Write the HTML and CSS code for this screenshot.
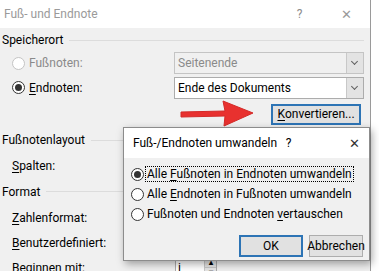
FILE: index.html
```html
<!DOCTYPE html>
<html>
  <head>
    <title>Fuß- und Endnote</title>
    <meta charset="UTF-8" />
    <link rel="stylesheet" href="styles.css">
  </head>
  <body>
    <div class="dialog main">
      <div class="titlebar">
        <span class="caption">Fuß- und Endnote</span>
        <span class="help">?</span>
        <span class="close">&#x2715;</span>
      </div>
      <div class="body">
        <div class="group"><span>Speicherort</span><i></i></div>
        <div class="row first">
          <span class="radio off disabled"></span>
          <span class="label disabled">Fußnoten:</span>
          <div class="combo disabled"><span>Seitenende</span><b></b></div>
        </div>
        <div class="row">
          <span class="radio on"></span>
          <span class="label"><u>E</u>ndnoten:</span>
          <div class="combo"><span>Ende des Dokuments</span><b></b></div>
        </div>
        <div class="row btnrow">
          <span class="button focus"><u>K</u>onvertieren...</span>
        </div>
        <div class="group layout"><span>Fußnotenlayout</span><i></i></div>
        <div class="row sub"><span class="label"><u>S</u>palten:</span></div>
        <div class="group format"><span>Format</span><i></i></div>
        <div class="row sub"><span class="label"><u>Z</u>ahlenformat:</span></div>
        <div class="row sub"><span class="label"><u>B</u>enutzerdefiniert:</span></div>
        <div class="row sub">
          <span class="label">Beginnen mit:</span>
          <div class="spin"><span>i</span><b><em>&#x25B4;</em><em>&#x25BE;</em></b></div>
        </div>
      </div>
    </div>

    <svg class="arrow" width="80" height="30" viewBox="0 0 80 30">
      <path d="M4 14 L48 13 L46 3 L76 15 L47 28 L48 18 L4 19 Z" fill="#e8312f" stroke="#d42a28" stroke-width="1" stroke-linejoin="round"/>
    </svg>

    <div class="dialog popup">
      <div class="titlebar">
        <span class="caption">Fuß-/Endnoten umwandeln</span>
        <span class="help">?</span>
        <span class="close">&#x2715;</span>
      </div>
      <div class="body">
        <div class="opt"><span class="radio on"></span><span class="dotted">Alle <u>F</u>ußnoten in Endnoten umwandeln</span></div>
        <div class="opt"><span class="radio off"></span><span>Alle <u>E</u>ndnoten in Fußnoten umwandeln</span></div>
        <div class="opt"><span class="radio off"></span><span>Fußnoten und Endnoten <u>v</u>ertauschen</span></div>
        <div class="buttons">
          <span class="button focus ok">OK</span>
          <span class="button">Abbrechen</span>
        </div>
      </div>
    </div>
  </body>
</html>
```

FILE: styles.css
```css
* {
  box-sizing: border-box;
}
html, body {
  margin: 0;
  background: #ffffff;
  font-family: Roboto, "Noto Sans", sans-serif;
  font-size: 12px;
  color: #000000;
}
body {
  position: relative;
  width: 379px;
  height: 271px;
  overflow: hidden;
}
u {
  text-decoration: underline;
  text-underline-offset: 2px;
}
.dialog.main {
  width: 371px;
  height: 271px;
  border-right: 1px solid #9a9a9a;
  display: flex;
  flex-direction: column;
}
.titlebar {
  height: 28px;
  background: #ffffff;
  display: flex;
  align-items: center;
  flex: none;
}
.main .titlebar .caption {
  margin-left: 4px;
  color: #9a9a9a;
  flex: 1;
}
.titlebar .help {
  color: #8c8c8c;
  width: 47px;
  text-align: center;
}
.titlebar .close {
  color: #9a9a9a;
  width: 47px;
  text-align: center;
  font-size: 13px;
}
.body {
  flex: 1;
  background: #f0f0f0;
}
.main .body {
  overflow: hidden;
}
.group {
  height: 24px;
  display: flex;
  align-items: center;
  padding-left: 2px;
  flex: none;
}
.group.layout {
  height: 26px;
}
.group.format {
  height: 27px;
}
.group i {
  flex: 1;
  height: 1px;
  background: #dcdcdc;
  margin: 0 6px 0 6px;
}
.row {
  height: 25px;
  display: flex;
  align-items: center;
  padding-left: 12px;
  flex: none;
}
.row.first {
  height: 23px;
  align-items: flex-start;
}
.row.first .radio {
  margin-top: 5px;
}
.row.first .label {
  line-height: 22px;
}
.row.sub {
  padding-left: 11px;
}
.row.btnrow {
  justify-content: flex-end;
  padding-right: 9px;
  height: 27px;
  padding-top: 1px;
}
.label {
  width: 162px;
  padding-left: 1px;
}
.radio + .label {
  width: 146px;
  margin-left: 3px;
}
.disabled {
  color: #8a8a8a;
}
.radio {
  width: 13px;
  height: 13px;
  border-radius: 50%;
  border: 1px solid #333333;
  background: #ffffff;
  flex: none;
  position: relative;
}
.radio.disabled {
  border-color: #c4c4c4;
}
.radio.on::after {
  content: "";
  position: absolute;
  left: 2px;
  top: 2px;
  width: 7px;
  height: 7px;
  border-radius: 50%;
  background: #333333;
}
.combo {
  width: 190px;
  height: 22px;
  border: 1px solid #acacac;
  background: #ffffff;
  display: flex;
  align-items: center;
}
.combo.disabled {
  background: #f0f0f0;
  border-color: #c4c4c4;
}
.combo span {
  flex: 1;
  padding-left: 3px;
}
.combo b {
  width: 17px;
  height: 20px;
  background: #e3e3e3;
  border-left: 1px solid #c8c8c8;
  position: relative;
}
.combo b::after {
  content: "";
  position: absolute;
  left: 5px;
  top: 6px;
  width: 4px;
  height: 4px;
  border-right: 1px solid #606060;
  border-bottom: 1px solid #606060;
  transform: rotate(45deg);
}
.button {
  height: 21px;
  border: 1px solid #adadad;
  background: #e1e1e1;
  display: inline-flex;
  align-items: center;
  justify-content: center;
  padding: 0 6px;
}
.button.focus {
  border: 2px solid #2d74b5;
}
.btnrow .button {
  width: 90px;
}
.spin {
  margin-left: 2px;
  width: 42px;
  height: 22px;
  border: 1px solid #acacac;
  background: #ffffff;
  display: flex;
}
.spin span {
  flex: 1;
  padding-left: 2px;
  line-height: 20px;
}
.spin b {
  width: 12px;
  display: flex;
  flex-direction: column;
  border-left: 1px solid #c8c8c8;
}
.spin em {
  font-style: normal;
  font-size: 8px;
  line-height: 9px;
  text-align: center;
  background: #e6e6e6;
  border-bottom: 1px solid #c8c8c8;
}
.arrow {
  position: absolute;
  left: 177px;
  top: 98px;
}
.dialog.popup {
  position: absolute;
  left: 123px;
  top: 127px;
  width: 247px;
  height: 134px;
  border: 1px solid #8c8c8c;
  display: flex;
  flex-direction: column;
  box-shadow: 2px 3px 8px rgba(0, 0, 0, 0.35);
}
.popup .titlebar {
  height: 30px;
}
.popup .titlebar .caption {
  margin-left: 9px;
  flex: 1;
  white-space: nowrap;
}
.popup .titlebar .help {
  color: #000000;
  width: 24px;
  margin-right: 40px;
}
.popup .titlebar .close {
  color: #333333;
  width: 30px;
}
.popup .body {
  padding: 6px 0 0 7px;
}
.opt {
  height: 20px;
  display: flex;
  align-items: center;
}
.opt .radio {
  margin-right: 2px;
}
.dotted {
  outline: 1px dotted #000000;
  outline-offset: 0;
  padding: 0 1px;
}
.opt span:last-child:not(.dotted) {
  padding-left: 1px;
}
.buttons {
  margin-top: 11px;
  display: flex;
  justify-content: flex-end;
  gap: 6px;
  padding-right: 6px;
}
.buttons .button {
  height: 22px;
}
.buttons .ok {
  width: 64px;
}
.buttons .button:last-child {
  width: 54px;
  padding: 0;
}
```
